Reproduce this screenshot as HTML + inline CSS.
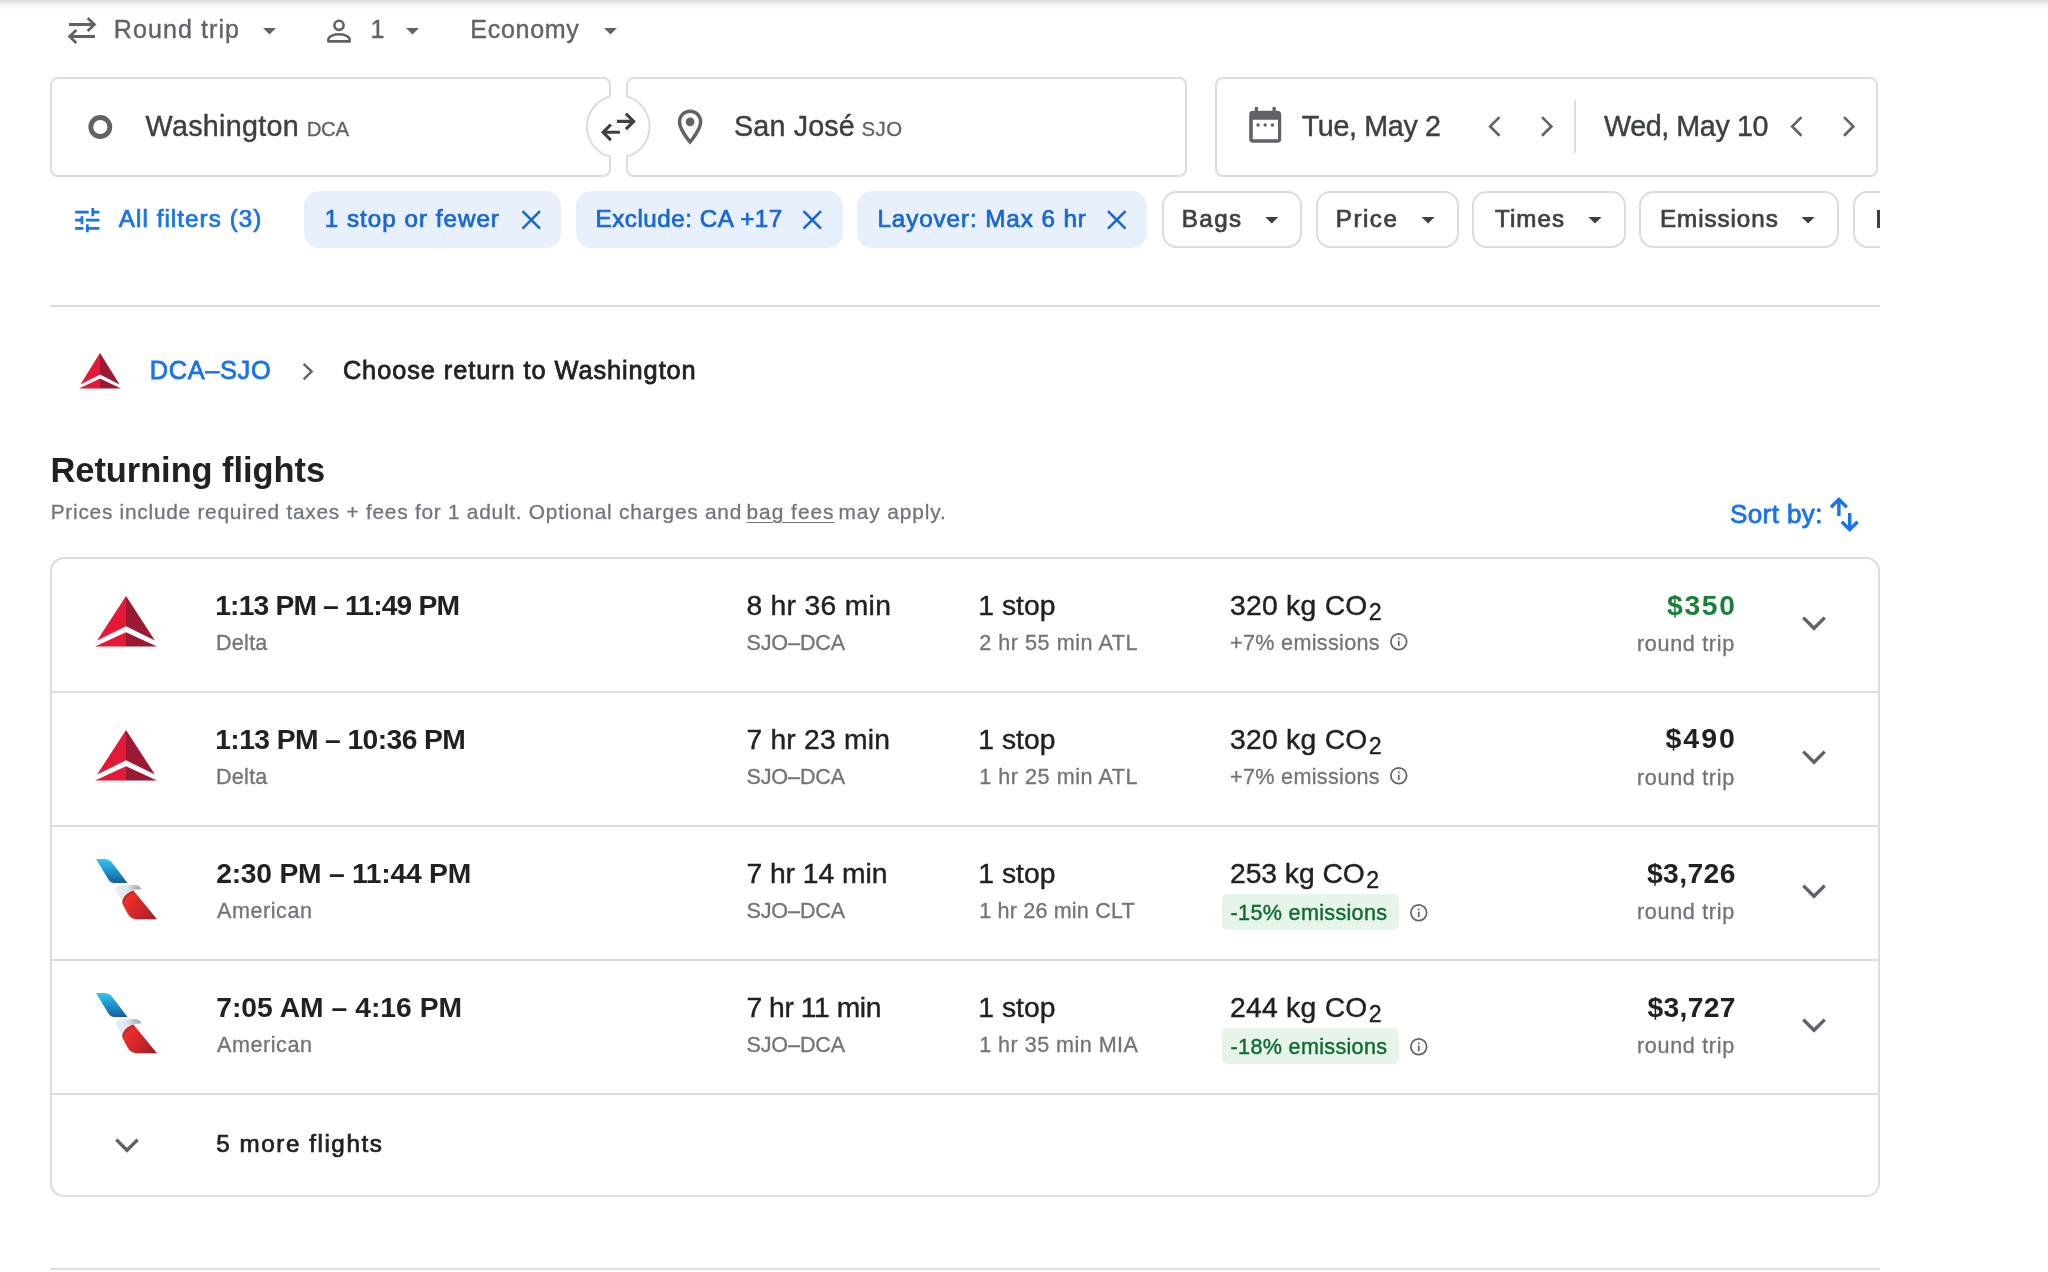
<!DOCTYPE html>
<html><head><meta charset="utf-8"><title>Flights</title>
<style>
html,body{margin:0;padding:0;background:#fff;}
body{width:2048px;height:1272px;overflow:hidden;font-family:"Liberation Sans",sans-serif;}
#page{will-change:transform;position:relative;width:2048px;height:1272px;overflow:hidden;background:#fff;}
.t{position:absolute;white-space:pre;line-height:1;font-family:"Liberation Sans",sans-serif;-webkit-font-smoothing:antialiased;}
.a{position:absolute;}
.box{position:absolute;box-sizing:border-box;border:2px solid #dadce0;border-radius:8px;background:#fff;}
.chipb{position:absolute;box-sizing:border-box;background:#e8f0fe;border-radius:15px;}
.chipo{position:absolute;box-sizing:border-box;background:transparent;border:2px solid #dadce0;border-radius:14.5px;}
.hl{position:absolute;height:2px;background:#dadce0;}
svg{position:absolute;overflow:visible;}

</style></head>
<body>
<div id="page">
<!-- top shadow -->
<div class="a" style="left:0;top:0;width:2048px;height:12px;background:linear-gradient(to bottom,rgba(60,64,67,.21) 0,rgba(60,64,67,.09) 3px,rgba(60,64,67,.03) 6.5px,rgba(60,64,67,0) 11px);"></div>

<!-- top row icons -->
<svg style="left:68px;top:17px" width="28" height="27" viewBox="0 0 28 27"><g fill="none" stroke="#5f6368" stroke-width="2.8"><path d="M1 7.5H26M19.7 0.9L26.4 7.5L19.7 14.1"/><path d="M27 19.5H2M8.3 12.9L1.6 19.5L8.3 26.1"/></g></svg>
<svg style="left:262.7px;top:27.8px" width="13" height="6.5" viewBox="0 0 13 6.5"><path d="M0 0H13L6.5 6.5Z" fill="#5f6368"/></svg>
<svg style="left:405.5px;top:27.8px" width="13" height="6.5" viewBox="0 0 13 6.5"><path d="M0 0H13L6.5 6.5Z" fill="#5f6368"/></svg>
<svg style="left:604.2px;top:27.8px" width="13" height="6.5" viewBox="0 0 13 6.5"><path d="M0 0H13L6.5 6.5Z" fill="#5f6368"/></svg>
<!-- person -->
<svg style="left:326.7px;top:18.5px" width="24" height="24" viewBox="0 0 24 24"><g fill="none" stroke="#5f6368" stroke-width="2.6"><circle cx="12" cy="6.3" r="4.6"/><path d="M1.4 22.4V20.6C1.4 17.2 7.5 15.3 12 15.3S22.6 17.2 22.6 20.6V22.4Z" stroke-linejoin="round"/></g></svg>

<!-- search boxes -->
<div class="box" style="left:50px;top:76.5px;width:561px;height:100px;"></div>
<div class="box" style="left:625.5px;top:76.5px;width:561px;height:100px;"></div>
<div class="box" style="left:1215px;top:76.5px;width:663px;height:100px;"></div>
<!-- swap circle -->
<svg style="left:580px;top:90px" width="76" height="74" viewBox="580 90 76 74"><circle cx="618.2" cy="126.6" r="31.3" fill="#fff"/><g fill="none" stroke="#dadce0" stroke-width="2"><path d="M610 96.4A31.3 31.3 0 0 0 610 156.8"/><path d="M626.5 96.4A31.3 31.3 0 0 1 626.5 156.8"/></g>
<g fill="none" stroke="#3c4043" stroke-width="3.1"><path d="M616.9 121.4H633M625.9 113.6L633.7 121.4L625.9 129.2"/><path d="M619.9 132.3H603.8M610.900 124.500L603.100 132.300L610.900 140.100"/></g></svg>
<!-- origin ring -->
<svg style="left:86px;top:113px" width="28" height="28" viewBox="86 113 28 28"><circle cx="100.300" cy="127" r="9.500" fill="none" stroke="#5f6368" stroke-width="4.800"/></svg>
<!-- pin -->
<svg style="left:668.5px;top:105.6px" width="42.2" height="42.2" viewBox="0 0 24 24"><path fill="#5f6368" d="M12 2C8.13 2 5 5.13 5 9c0 5.25 7 13 7 13s7-7.750 7-13c0-3.870-3.130-7-7-7zM7 9c0-2.760 2.240-5 5-5s5 2.240 5 5c0 2.880-2.880 7.190-5 9.880C9.920 16.210 7 11.850 7 9z"/><circle cx="12" cy="9" r="2.5" fill="#5f6368"/></svg>
<!-- calendar -->
<svg style="left:1249px;top:107px" width="32.4" height="36" viewBox="0 0 32.4 36"><path fill="#5f6368" fill-rule="evenodd" d="M5.800 0H8.900V3.700H23.500V0H26.800V3.700H28.400A3.800 3.800 0 0 1 32.200 7.500V31.900A3.800 3.800 0 0 1 28.400 35.700H4A3.800 3.800 0 0 1 0.200 31.900V7.500A3.800 3.800 0 0 1 4 3.700H5.800ZM3.800 12.700V32.200H29V12.700Z"/><circle cx="9.100" cy="17.900" r="1.750" fill="#5f6368"/><circle cx="16.200" cy="17.900" r="1.750" fill="#5f6368"/><circle cx="23.400" cy="17.900" r="1.750" fill="#5f6368"/></svg>
<!-- date chevrons -->
<svg style="left:0;top:0" width="2048" height="200" viewBox="0 0 2048 200"><g fill="none" stroke="#5f6368" stroke-width="2.7"><path d="M1499.5 117.100L1490.200 126.400L1499.500 135.700"/><path d="M1542 117.100L1551.300 126.400L1542 135.700"/><path d="M1801.500 117.100L1792.200 126.400L1801.500 135.700"/><path d="M1844 117.100L1853.300 126.400L1844 135.700"/></g></svg>
<div class="a" style="left:1574.3px;top:100.3px;width:2px;height:53px;background:#dadce0;"></div>

<!-- filter chips -->
<svg style="left:71.1px;top:203.7px" width="32.7" height="32.4" viewBox="0 0 24 24"><path fill="#1a73e8" d="M3 17v2h6v-2H3zM3 5v2h10V5H3zm10 16v-2h8v-2h-8v-2h-2v6h2zM7 9v2H3v2h4v2h2V9H7zm14 4v-2H11v2h10zm-6-4h2V7h4V5h-4V3h-2v6z"/></svg>
<div class="chipb" style="left:304px;top:191.200px;width:257px;height:56.600px;"></div>
<div class="chipb" style="left:575.600px;top:191.200px;width:267.200px;height:56.600px;"></div>
<div class="chipb" style="left:857px;top:191.200px;width:290px;height:56.600px;"></div>
<svg style="left:0;top:0" width="2048" height="300" viewBox="0 0 2048 300"><g fill="none" stroke="#1967d2" stroke-width="2.600"><path d="M522.500 211.200L540 228.700M540 211.200L522.500 228.700"/><path d="M803.500 211.200L821 228.700M821 211.200L803.500 228.700"/><path d="M1108 211.200L1125.500 228.700M1125.500 211.200L1108 228.700"/></g>
<g fill="#3c4043"><path d="M1265.200 217.000H1278.400L1271.800 223.600Z"/><path d="M1421.500 217.000H1434.700L1428.100 223.600Z"/><path d="M1588.400 217.000H1601.600L1595 223.600Z"/><path d="M1801.500 217.000H1814.700L1808.100 223.600Z"/></g></svg>
<div class="chipo" style="left:1161.500px;top:191.000px;width:140.700px;height:57.300px;"></div>
<div class="chipo" style="left:1315.800px;top:191.000px;width:143px;height:57.300px;"></div>
<div class="chipo" style="left:1472px;top:191.000px;width:153.800px;height:57.300px;"></div>
<div class="chipo" style="left:1639px;top:191.000px;width:200px;height:57.300px;"></div>
<div class="a" style="left:1850px;top:185px;width:30px;height:70px;overflow:hidden;"><div class="chipo" style="left:2.500px;top:5.700px;width:200px;height:57.300px;"></div><div class="a" style="left:26.700px;top:25.100px;width:3.300px;height:17.700px;background:#3c4043;"></div></div>

<!-- rule -->
<div class="hl" style="left:50px;top:305px;width:1830px;"></div>
<div class="hl" style="left:50px;top:1268.100px;width:1830px;"></div>
<!-- defs: logos -->
<svg width="0" height="0" style="left:0;top:0"><defs>
<g id="delta"><path d="M31 0L2.1 44.5L31 30.3Z" fill="#e51937"/><path d="M31 0L59.9 44.5L31 30.3Z" fill="#9a1a33"/><path d="M0 50.4L31 36.2V50.4Z" fill="#e51937"/><path d="M62 50.4L31 36.2V50.4Z" fill="#9a1a33"/></g>
<linearGradient id="aab" x1="0" y1="0" x2="0" y2="1"><stop offset="0" stop-color="#36c6f0"/><stop offset="0.450" stop-color="#1c9bd0"/><stop offset="1" stop-color="#1a5a9e"/></linearGradient>
<linearGradient id="aar" x1="0" y1="0.300" x2="1" y2="0.700"><stop offset="0" stop-color="#ee3129"/><stop offset="0.500" stop-color="#d4262a"/><stop offset="1" stop-color="#a31f25"/></linearGradient>
<linearGradient id="aas" x1="0" y1="0" x2="1" y2="0"><stop offset="0" stop-color="#e9edf1"/><stop offset="0.450" stop-color="#dfe5ea"/><stop offset="1" stop-color="#8fa0ab"/></linearGradient>
<g id="aa">
<path d="M0 0H9C12.500 0.200 14.500 1.700 16.500 4.200L31.500 24H18C14.500 23.700 13 21.700 11.700 19.200Z" fill="url(#aab)"/>
<path d="M19.700 31C19.700 28.500 21.500 26.500 25.600 26.200L39.700 25.900C42.500 26.200 44.300 27.800 45.600 30.300L37.400 31C32 32.500 27.500 36 26.400 42.800Z" fill="url(#aas)"/>
<path d="M37.400 31.400L61 60.300H39.700C35.500 59.700 33.200 57.500 31.200 53.800L26.800 45.400C25.500 41 28 35 37.400 31.400Z" fill="url(#aar)"/>
<path d="M37.400 31.400C30 34 26.500 39 26.400 43.500L27.300 46C28 40 31.500 36 38.600 32.900Z" fill="#b5262b" opacity=".8"/>
</g>
<g id="info"><circle cx="8.750" cy="8.750" r="7.900" fill="none" stroke="#5f6368" stroke-width="1.700"/><rect x="7.900" y="7.800" width="1.700" height="5.300" fill="#5f6368"/><rect x="7.900" y="4.500" width="1.700" height="1.800" fill="#5f6368"/></g>
<g id="chev"><path d="M1.300 1.600L12 12.300L22.700 1.600" fill="none" stroke="#5f6368" stroke-width="3.400"/></g>
</defs></svg>

<!-- breadcrumb -->
<svg style="left:79.300px;top:353.200px" width="42" height="35.600" viewBox="0 0 62 50.4" preserveAspectRatio="none"><use href="#delta"/></svg>
<svg style="left:302px;top:363px" width="14" height="20" viewBox="302 363 14 20"><path d="M303.600 363.800L311.600 371.600L303.600 379.400" fill="none" stroke="#5f6368" stroke-width="2.400"/></svg>

<!-- sort icon -->
<svg style="left:1825px;top:490px" width="40" height="48" viewBox="1825 490 40 48"><g fill="none" stroke="#1a73e8" stroke-width="3.400"><path d="M1838.900 516V499.500M1831 507.200L1838.900 499.300L1846.800 507.200"/><path d="M1849.700 513V529.500M1841.800 521.800L1849.700 529.700L1857.600 521.800"/></g></svg>

<!-- list box -->
<div class="box" style="left:50px;top:557px;width:1830px;height:640px;border-radius:14px;"></div>
<div class="hl" style="left:52px;top:691.200px;width:1826px;"></div>
<div class="hl" style="left:52px;top:825.200px;width:1826px;"></div>
<div class="hl" style="left:52px;top:959.200px;width:1826px;"></div>
<div class="hl" style="left:52px;top:1093.200px;width:1826px;"></div>

<!-- logos -->
<svg style="left:95px;top:595.5px" width="62" height="50.4" viewBox="0 0 62 50.4"><use href="#delta"/></svg>
<svg style="left:95px;top:729.5px" width="62" height="50.4" viewBox="0 0 62 50.4"><use href="#delta"/></svg>
<svg style="left:95.500px;top:859.300px" width="61" height="60.500" viewBox="0 0 61 60.500"><use href="#aa"/></svg>
<svg style="left:95.500px;top:993.300px" width="61" height="60.500" viewBox="0 0 61 60.500"><use href="#aa"/></svg>

<!-- emission badges -->
<div class="a" style="left:1221.500px;top:894px;width:177.700px;height:36px;background:#e6f4ea;border-radius:5px;"></div>
<div class="a" style="left:1221.500px;top:1028px;width:177.700px;height:36px;background:#e6f4ea;border-radius:5px;"></div>

<!-- info icons -->
<svg style="left:1389.600px;top:633.400px" width="17.500" height="17.500" viewBox="0 0 17.500 17.500"><use href="#info"/></svg>
<svg style="left:1389.600px;top:767.400px" width="17.500" height="17.500" viewBox="0 0 17.500 17.500"><use href="#info"/></svg>
<svg style="left:1410.200px;top:903.600px" width="17.500" height="17.500" viewBox="0 0 17.500 17.500"><use href="#info"/></svg>
<svg style="left:1410.200px;top:1037.600px" width="17.500" height="17.500" viewBox="0 0 17.500 17.500"><use href="#info"/></svg>

<!-- row chevrons -->
<svg style="left:1801.900px;top:616.400px" width="24" height="15" viewBox="0 0 24 15"><use href="#chev"/></svg>
<svg style="left:1801.900px;top:750.400px" width="24" height="15" viewBox="0 0 24 15"><use href="#chev"/></svg>
<svg style="left:1801.900px;top:884.400px" width="24" height="15" viewBox="0 0 24 15"><use href="#chev"/></svg>
<svg style="left:1801.900px;top:1018.400px" width="24" height="15" viewBox="0 0 24 15"><use href="#chev"/></svg>
<svg style="left:114.900px;top:1138.200px" width="24" height="15" viewBox="0 0 24 15"><use href="#chev"/></svg>

<div class="t" style="left:113.8px;top:17.0px;font-size:25.07px;color:#5f6368;letter-spacing:1.07px;-webkit-text-stroke:0.38px #5f6368;">Round trip</div>
<div class="t" style="left:370.4px;top:17.0px;font-size:25.07px;color:#5f6368;-webkit-text-stroke:0.38px #5f6368;">1</div>
<div class="t" style="left:470.3px;top:16.8px;font-size:25.07px;color:#5f6368;letter-spacing:0.68px;-webkit-text-stroke:0.38px #5f6368;">Economy</div>
<div class="t" style="left:145.6px;top:112.2px;font-size:28.70px;color:#3c4043;letter-spacing:0.30px;-webkit-text-stroke:0.43px #3c4043;">Washington</div>
<div class="t" style="left:306.8px;top:119.1px;font-size:20.43px;color:#5f6368;letter-spacing:-0.45px;-webkit-text-stroke:0.31px #5f6368;">DCA</div>
<div class="t" style="left:734.0px;top:112.2px;font-size:28.70px;color:#3c4043;letter-spacing:0.16px;-webkit-text-stroke:0.43px #3c4043;">San José</div>
<div class="t" style="left:861.5px;top:119.1px;font-size:20.43px;color:#5f6368;letter-spacing:0.50px;-webkit-text-stroke:0.31px #5f6368;">SJO</div>
<div class="t" style="left:1301.7px;top:112.4px;font-size:28.70px;color:#3c4043;letter-spacing:-0.34px;-webkit-text-stroke:0.43px #3c4043;">Tue, May 2</div>
<div class="t" style="left:1604.0px;top:112.4px;font-size:28.70px;color:#3c4043;letter-spacing:-0.41px;-webkit-text-stroke:0.43px #3c4043;">Wed, May 10</div>
<div class="t" style="left:118.8px;top:207.0px;font-size:24.20px;color:#1a73e8;letter-spacing:1.06px;-webkit-text-stroke:0.73px #1a73e8;">All filters (3)</div>
<div class="t" style="left:324.8px;top:207.0px;font-size:24.20px;color:#1967d2;letter-spacing:1.01px;-webkit-text-stroke:0.73px #1967d2;">1 stop or fewer</div>
<div class="t" style="left:595.5px;top:207.0px;font-size:24.20px;color:#1967d2;letter-spacing:0.52px;-webkit-text-stroke:0.73px #1967d2;">Exclude: CA +17</div>
<div class="t" style="left:877.4px;top:207.0px;font-size:24.20px;color:#1967d2;letter-spacing:0.93px;-webkit-text-stroke:0.73px #1967d2;">Layover: Max 6 hr</div>
<div class="t" style="left:1181.8px;top:207.0px;font-size:24.20px;color:#3c4043;letter-spacing:1.40px;-webkit-text-stroke:0.73px #3c4043;">Bags</div>
<div class="t" style="left:1335.8px;top:207.0px;font-size:24.20px;color:#3c4043;letter-spacing:1.50px;-webkit-text-stroke:0.73px #3c4043;">Price</div>
<div class="t" style="left:1495.0px;top:207.0px;font-size:24.20px;color:#3c4043;letter-spacing:1.03px;-webkit-text-stroke:0.73px #3c4043;">Times</div>
<div class="t" style="left:1660.0px;top:207.0px;font-size:24.20px;color:#3c4043;letter-spacing:0.94px;-webkit-text-stroke:0.73px #3c4043;">Emissions</div>
<div class="t" style="left:149.7px;top:358.0px;font-size:25.36px;color:#1a73e8;letter-spacing:0.67px;-webkit-text-stroke:0.76px #1a73e8;">DCA–SJO</div>
<div class="t" style="left:342.9px;top:358.0px;font-size:25.36px;color:#202124;letter-spacing:0.92px;-webkit-text-stroke:0.76px #202124;">Choose return to Washington</div>
<div class="t" style="left:50.5px;top:453.4px;font-size:34.42px;color:#202124;letter-spacing:-0.04px;font-weight:bold;">Returning flights</div>
<div class="t" style="left:50.7px;top:501.9px;font-size:20.87px;color:#70757a;letter-spacing:0.74px;-webkit-text-stroke:0.31px #70757a;">Prices include required taxes + fees for 1 adult. Optional charges and</div>
<div class="t" style="left:746.5px;top:501.9px;font-size:20.87px;color:#70757a;letter-spacing:1.00px;-webkit-text-stroke:0.31px #70757a;text-decoration:underline;text-underline-offset:2.5px;text-decoration-thickness:1.3px;">bag fees</div>
<div class="t" style="left:838.5px;top:501.9px;font-size:20.87px;color:#70757a;letter-spacing:0.89px;-webkit-text-stroke:0.31px #70757a;">may apply.</div>
<div class="t" style="left:1729.9px;top:500.5px;font-size:26.09px;color:#1a73e8;letter-spacing:0.39px;-webkit-text-stroke:0.78px #1a73e8;">Sort by:</div>
<div class="t" style="left:215.2px;top:590.5px;font-size:28.26px;color:#202124;letter-spacing:-0.84px;font-weight:bold;">1:13 PM – 11:49 PM</div>
<div class="t" style="left:216.0px;top:631.8px;font-size:21.59px;color:#70757a;letter-spacing:0.25px;-webkit-text-stroke:0.32px #70757a;">Delta</div>
<div class="t" style="left:746.4px;top:590.5px;font-size:28.26px;color:#202124;letter-spacing:0.32px;-webkit-text-stroke:0.42px #202124;">8 hr 36 min</div>
<div class="t" style="left:746.4px;top:631.8px;font-size:21.59px;color:#70757a;letter-spacing:-0.12px;-webkit-text-stroke:0.32px #70757a;">SJO–DCA</div>
<div class="t" style="left:978.2px;top:590.5px;font-size:28.26px;color:#202124;letter-spacing:0.08px;-webkit-text-stroke:0.42px #202124;">1 stop</div>
<div class="t" style="left:979.2px;top:631.8px;font-size:21.59px;color:#70757a;letter-spacing:0.54px;-webkit-text-stroke:0.32px #70757a;">2 hr 55 min ATL</div>
<div class="t" style="left:1230.0px;top:590.5px;font-size:28.26px;color:#202124;letter-spacing:0.28px;-webkit-text-stroke:0.42px #202124;">320 kg CO</div>
<div class="t" style="left:1368.7px;top:601.0px;font-size:23.19px;color:#202124;-webkit-text-stroke:0.35px #202124;">2</div>
<div class="t" style="left:1230.0px;top:631.8px;font-size:21.59px;color:#70757a;letter-spacing:0.32px;-webkit-text-stroke:0.32px #70757a;">+7% emissions</div>
<div class="t" style="left:1667.0px;top:590.5px;font-size:28.26px;color:#188038;letter-spacing:1.67px;font-weight:bold;">$350</div>
<div class="t" style="left:1637.0px;top:633.3px;font-size:21.59px;color:#70757a;letter-spacing:0.67px;-webkit-text-stroke:0.32px #70757a;">round trip</div>
<div class="t" style="left:215.2px;top:724.5px;font-size:28.26px;color:#202124;letter-spacing:-0.59px;font-weight:bold;">1:13 PM – 10:36 PM</div>
<div class="t" style="left:216.0px;top:765.8px;font-size:21.59px;color:#70757a;letter-spacing:0.25px;-webkit-text-stroke:0.32px #70757a;">Delta</div>
<div class="t" style="left:746.4px;top:724.5px;font-size:28.26px;color:#202124;letter-spacing:0.23px;-webkit-text-stroke:0.42px #202124;">7 hr 23 min</div>
<div class="t" style="left:746.4px;top:765.8px;font-size:21.59px;color:#70757a;letter-spacing:-0.12px;-webkit-text-stroke:0.32px #70757a;">SJO–DCA</div>
<div class="t" style="left:978.2px;top:724.5px;font-size:28.26px;color:#202124;letter-spacing:0.08px;-webkit-text-stroke:0.42px #202124;">1 stop</div>
<div class="t" style="left:979.2px;top:765.8px;font-size:21.59px;color:#70757a;letter-spacing:0.54px;-webkit-text-stroke:0.32px #70757a;">1 hr 25 min ATL</div>
<div class="t" style="left:1230.0px;top:724.5px;font-size:28.26px;color:#202124;letter-spacing:0.28px;-webkit-text-stroke:0.42px #202124;">320 kg CO</div>
<div class="t" style="left:1368.7px;top:735.0px;font-size:23.19px;color:#202124;-webkit-text-stroke:0.35px #202124;">2</div>
<div class="t" style="left:1230.0px;top:765.8px;font-size:21.59px;color:#70757a;letter-spacing:0.32px;-webkit-text-stroke:0.32px #70757a;">+7% emissions</div>
<div class="t" style="left:1665.5px;top:724.3px;font-size:28.55px;color:#202124;letter-spacing:1.96px;font-weight:bold;">$490</div>
<div class="t" style="left:1637.0px;top:767.3px;font-size:21.59px;color:#70757a;letter-spacing:0.67px;-webkit-text-stroke:0.32px #70757a;">round trip</div>
<div class="t" style="left:216.2px;top:858.5px;font-size:28.26px;color:#202124;letter-spacing:-0.24px;font-weight:bold;">2:30 PM – 11:44 PM</div>
<div class="t" style="left:217.0px;top:899.8px;font-size:21.59px;color:#70757a;letter-spacing:0.54px;-webkit-text-stroke:0.32px #70757a;">American</div>
<div class="t" style="left:746.4px;top:858.5px;font-size:28.26px;color:#202124;letter-spacing:-0.02px;-webkit-text-stroke:0.42px #202124;">7 hr 14 min</div>
<div class="t" style="left:746.4px;top:899.8px;font-size:21.59px;color:#70757a;letter-spacing:-0.12px;-webkit-text-stroke:0.32px #70757a;">SJO–DCA</div>
<div class="t" style="left:978.2px;top:858.5px;font-size:28.26px;color:#202124;letter-spacing:0.08px;-webkit-text-stroke:0.42px #202124;">1 stop</div>
<div class="t" style="left:979.2px;top:899.8px;font-size:21.59px;color:#70757a;letter-spacing:0.17px;-webkit-text-stroke:0.32px #70757a;">1 hr 26 min CLT</div>
<div class="t" style="left:1230.0px;top:858.5px;font-size:28.26px;color:#202124;letter-spacing:-0.04px;-webkit-text-stroke:0.42px #202124;">253 kg CO</div>
<div class="t" style="left:1366.2px;top:869.0px;font-size:23.19px;color:#202124;-webkit-text-stroke:0.35px #202124;">2</div>
<div class="t" style="left:1230.6px;top:901.6px;font-size:21.59px;color:#116b30;letter-spacing:0.32px;-webkit-text-stroke:0.43px #116b30;">-15% emissions</div>
<div class="t" style="left:1647.0px;top:858.5px;font-size:28.26px;color:#202124;letter-spacing:0.40px;font-weight:bold;">$3,726</div>
<div class="t" style="left:1637.0px;top:901.3px;font-size:21.59px;color:#70757a;letter-spacing:0.67px;-webkit-text-stroke:0.32px #70757a;">round trip</div>
<div class="t" style="left:216.2px;top:992.5px;font-size:28.26px;color:#202124;letter-spacing:0.03px;font-weight:bold;">7:05 AM – 4:16 PM</div>
<div class="t" style="left:217.0px;top:1033.8px;font-size:21.59px;color:#70757a;letter-spacing:0.54px;-webkit-text-stroke:0.32px #70757a;">American</div>
<div class="t" style="left:746.4px;top:992.5px;font-size:28.26px;color:#202124;letter-spacing:-0.42px;-webkit-text-stroke:0.42px #202124;">7 hr 11 min</div>
<div class="t" style="left:746.4px;top:1033.8px;font-size:21.59px;color:#70757a;letter-spacing:-0.12px;-webkit-text-stroke:0.32px #70757a;">SJO–DCA</div>
<div class="t" style="left:978.2px;top:992.5px;font-size:28.26px;color:#202124;letter-spacing:0.08px;-webkit-text-stroke:0.42px #202124;">1 stop</div>
<div class="t" style="left:979.2px;top:1033.8px;font-size:21.59px;color:#70757a;letter-spacing:0.46px;-webkit-text-stroke:0.32px #70757a;">1 hr 35 min MIA</div>
<div class="t" style="left:1230.0px;top:992.5px;font-size:28.26px;color:#202124;letter-spacing:0.28px;-webkit-text-stroke:0.42px #202124;">244 kg CO</div>
<div class="t" style="left:1368.7px;top:1003.0px;font-size:23.19px;color:#202124;-webkit-text-stroke:0.35px #202124;">2</div>
<div class="t" style="left:1230.6px;top:1035.6px;font-size:21.59px;color:#116b30;letter-spacing:0.32px;-webkit-text-stroke:0.43px #116b30;">-18% emissions</div>
<div class="t" style="left:1647.5px;top:992.5px;font-size:28.26px;color:#202124;letter-spacing:0.30px;font-weight:bold;">$3,727</div>
<div class="t" style="left:1637.0px;top:1035.3px;font-size:21.59px;color:#70757a;letter-spacing:0.67px;-webkit-text-stroke:0.32px #70757a;">round trip</div>
<div class="t" style="left:216.3px;top:1132.0px;font-size:24.20px;color:#202124;letter-spacing:1.56px;-webkit-text-stroke:0.73px #202124;">5 more flights</div>
</div>
</body></html>
